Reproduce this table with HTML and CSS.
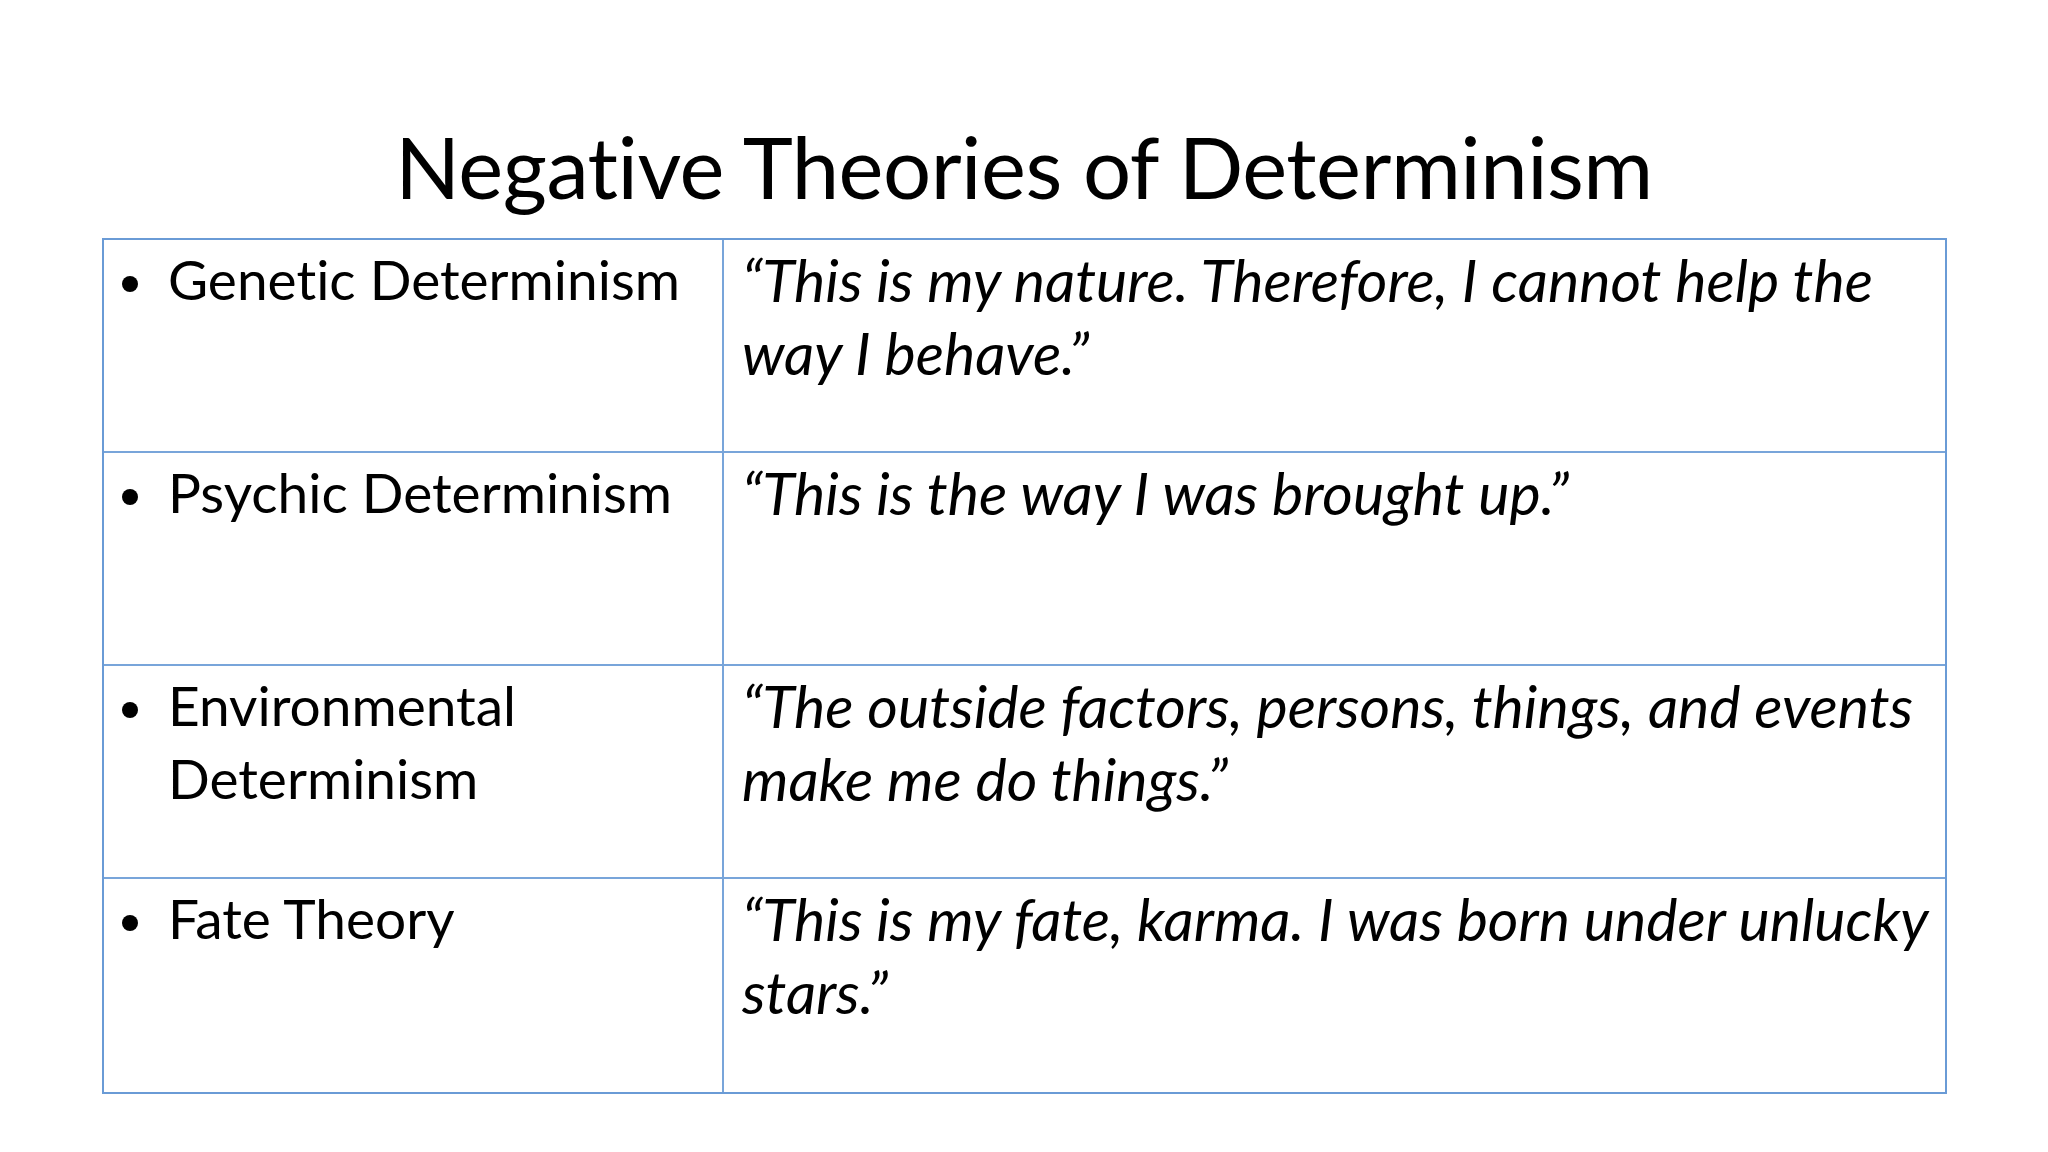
FILE: index.html
```html
<!DOCTYPE html>
<html lang="en">
<head>
<meta charset="utf-8">
<title>Negative Theories of Determinism</title>
<link rel="stylesheet" href="styles.css">
</head>
<body>
<main class="slide">
  <h1 class="title">Negative Theories of Determinism</h1>
  <div class="table">
    <div class="cell term"><span class="bullet"></span><span class="label">Genetic Determinism</span></div>
    <div class="cell quote">“This is my nature. Therefore, I cannot help the way I behave.”</div>
    <div class="cell term"><span class="bullet"></span><span class="label">Psychic Determinism</span></div>
    <div class="cell quote">“This is the way I was brought up.”</div>
    <div class="cell term"><span class="bullet"></span><span class="label">Environmental Determinism</span></div>
    <div class="cell quote">“The outside factors, persons, things, and events make me do things.”</div>
    <div class="cell term last"><span class="bullet"></span><span class="label">Fate Theory</span></div>
    <div class="cell quote last">“This is my fate, karma. I was born under unlucky stars.”</div>
  </div>
</main>
</body>
</html>
```

FILE: styles.css
```css
html, body {
  margin: 0;
  padding: 0;
  background: #ffffff;
}

body {
  width: 2048px;
  height: 1152px;
  overflow: hidden;
  font-family: Lato, "Open Sans", "Liberation Sans", sans-serif;
  font-variant-ligatures: none;
  color: #000000;
}

.slide {
  padding-top: 115px;
}

.title {
  margin: 0;
  font-weight: 400;
  font-size: 85px;
  line-height: 102px;
  text-align: center;
  letter-spacing: -0.5px;
}

.table {
  box-sizing: border-box;
  margin: 21px 0 0 102px;
  width: 1845px;
  height: 856px;
  border: 2px solid #6a9bd6;
  display: grid;
  grid-template-columns: 620px 1fr;
  grid-template-rows: repeat(4, 1fr);
}

.cell {
  box-sizing: border-box;
  border-bottom: 2px solid #78a5da;
  line-height: 73px;
  padding-top: 3px;
}

.cell.last {
  border-bottom: none;
}

.term {
  font-size: 55px;
  border-right: 2px solid #78a5da;
  display: flex;
  align-items: flex-start;
  padding-left: 18px;
}

.bullet {
  flex: none;
  width: 16px;
  height: 16px;
  border-radius: 50%;
  background: #000000;
  margin-top: 33px;
  margin-right: 30px;
}

.label {
  flex: 1;
}

.quote {
  font-size: 59px;
  font-style: italic;
  padding-left: 18px;
  padding-right: 10px;
}
```
